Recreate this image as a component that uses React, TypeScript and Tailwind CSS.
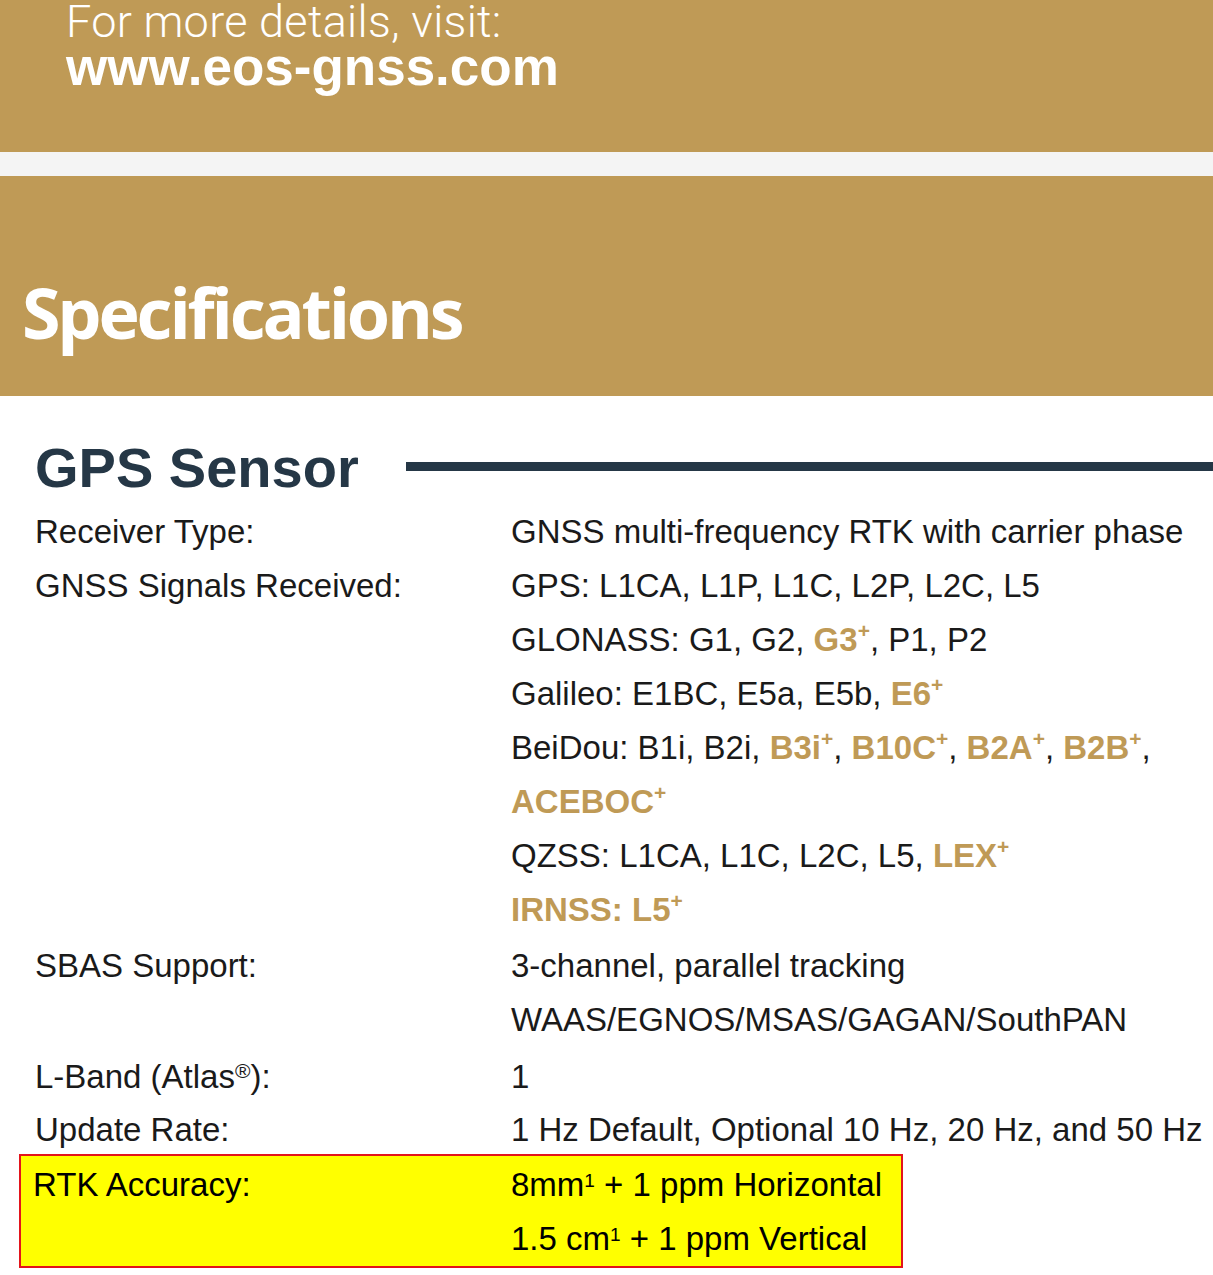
import React from 'react';

const GOLD = 'text-[#bf9a56]';

function Plus() {
  return <sup className="text-[21px] font-bold top-[-13px]">+</sup>;
}

function Gold({ children }: { children: React.ReactNode }) {
  return (
    <span className={`${GOLD} font-bold`}>
      {children}
      <Plus />
    </span>
  );
}

type Row = {
  label: React.ReactNode;
  values: React.ReactNode[];
  gap?: string;
};

const rows: Row[] = [
  { label: 'Receiver Type:', values: ['GNSS multi-frequency RTK with carrier phase'] },
  {
    label: 'GNSS Signals Received:',
    values: [
      'GPS: L1CA, L1P, L1C, L2P, L2C, L5',
      <>GLONASS: G1, G2, <Gold>G3</Gold>, P1, P2</>,
      <>Galileo: E1BC, E5a, E5b, <Gold>E6</Gold></>,
      <>BeiDou: B1i, B2i, <Gold>B3i</Gold>, <Gold>B10C</Gold>, <Gold>B2A</Gold>, <Gold>B2B</Gold>,</>,
      <Gold>ACEBOC</Gold>,
      <>QZSS: L1CA, L1C, L2C, L5, <Gold>LEX</Gold></>,
      <Gold>IRNSS: L5</Gold>,
    ],
  },
  {
    label: 'SBAS Support:',
    values: ['3-channel, parallel tracking', 'WAAS/EGNOS/MSAS/GAGAN/SouthPAN'],
    gap: 'mt-[2px]',
  },
  {
    label: (
      <>
        L-Band (Atlas<sup className="text-[21px]">®</sup>):
      </>
    ),
    values: ['1'],
    gap: 'mt-[3px]',
  },
  { label: 'Update Rate:', values: ['1 Hz Default, Optional 10 Hz, 20 Hz, and 50 Hz'], gap: '-mt-[1px]' },
];

export default function App() {
  return (
    <div className="min-h-[1275px] w-full bg-white overflow-hidden font-['Liberation_Sans',Arial,sans-serif] text-[#1a1a1a]">
      {/* Top banner */}
      <div className="h-[152px] bg-[#bf9a56] pl-[66px] text-white">
        <div className="font-['Roboto',sans-serif] font-light text-[45px] leading-[44px] tracking-[0.3px]">
          For more details, visit:
        </div>
        <div className="font-bold text-[53px] leading-[46px]">www.eos-gnss.com</div>
      </div>
      <div className="h-[24px] bg-[#f4f4f4]" />

      {/* Specifications band */}
      <div className="h-[220px] bg-[#bf9a56] pl-[22px] pt-[100px]">
        <h1 className="font-['Open_Sans',sans-serif] font-bold text-white text-[70px] leading-[72px] tracking-[-3.2px]">
          Specifications
        </h1>
      </div>

      {/* GPS Sensor */}
      <div className="pt-[44px]">
        <div className="flex items-start">
          <h2 className="pl-[35px] font-bold text-[56px] leading-[56px] text-[#253746] whitespace-nowrap">GPS Sensor</h2>
          <div className="ml-[47px] mt-[22px] h-[9px] flex-1 bg-[#253746]" />
        </div>

        <div className="mt-[9px] text-[33px] leading-[54px]">
          {rows.map((row, i) => (
            <div key={i} className={`grid grid-cols-[476px_1fr] pl-[35px] ${row.gap ?? ''}`}>
              <div className="whitespace-nowrap">{row.label}</div>
              <div>
                {row.values.map((v, j) => (
                  <div key={j} className="whitespace-nowrap">
                    {v}
                  </div>
                ))}
              </div>
            </div>
          ))}

          <div className="ml-[19px] -mt-[3px] w-[884px] border-2 border-[#e3141b] bg-[#ffff00] pl-[12px] pt-[2px] grid grid-cols-[478px_1fr] text-black">
            <div className="whitespace-nowrap">RTK Accuracy:</div>
            <div>
              <div className="whitespace-nowrap">
                8mm<sup className="text-[19px]">1</sup> + 1 ppm Horizontal
              </div>
              <div className="whitespace-nowrap">
                1.5 cm<sup className="text-[19px]">1</sup> + 1 ppm Vertical
              </div>
            </div>
          </div>
        </div>
      </div>
    </div>
  );
}
